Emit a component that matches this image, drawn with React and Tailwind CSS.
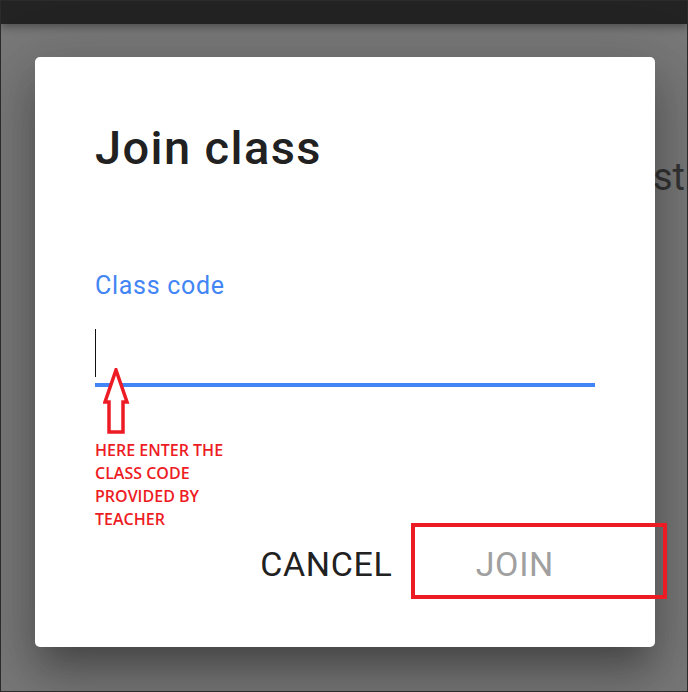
import React from "react";

const roboto = { fontFamily: "Roboto, 'Liberation Sans', sans-serif" };

const Arrow = () => (
  <svg width="28" height="68" viewBox="0 0 28 68" className="absolute left-[8px] top-[39px]">
    <polygon
      points="13,2 24,34 20,34 20,64 6,64 6,34 2,34"
      fill="white"
      stroke="#ed1c24"
      strokeWidth="3.5"
      strokeLinejoin="miter"
    />
  </svg>
);

const App = () => {
  return (
    <div
      className="relative w-[688px] h-[692px] overflow-hidden border border-[#2b2b2b] bg-[#787878]"
      style={roboto}
    >
      {/* page behind the scrim */}
      <div className="h-[23px] bg-[#232323] shadow-[0_3px_8px_rgba(0,0,0,0.35)]"></div>
      <span className="absolute left-[652px] top-[154px] text-[38px] leading-[44px] text-[#333333]">st</span>

      {/* dialog */}
      <div className="absolute left-[34px] top-[56px] w-[620px] h-[590px] flex flex-col rounded-[5px] bg-white pl-[60px] pt-[64px] shadow-[0_22px_30px_-12px_rgba(0,0,0,0.25),0_30px_50px_4px_rgba(0,0,0,0.16),0_12px_60px_12px_rgba(0,0,0,0.12)]">
        <h2 className="text-[47px] leading-[54px] font-medium tracking-[1.4px] text-[#212121]">Join class</h2>
        <div className="mt-[97px] text-[25px] leading-[28px] tracking-[0.7px] text-[#4285f4]">Class code</div>
        <div className="relative mt-[29px]">
          <div className="h-[48px] w-px bg-[#111]"></div>
          <div className="mt-[6px] h-[4px] w-[500px] bg-[#4285f4]"></div>
          <Arrow />
        </div>
        <div
          className="mt-[52px] flex flex-col text-[16px] leading-[23px] font-semibold text-[#ed1c24]"
          style={{ fontFamily: "'Open Sans', sans-serif" }}
        >
          <span>HERE ENTER THE</span>
          <span>CLASS CODE</span>
          <span>PROVIDED BY</span>
          <span>TEACHER</span>
        </div>
        <div className="mt-[13px] flex justify-end items-center gap-[83px] pr-[101px] text-[34px] leading-[40px]">
          <button className="text-[#212121] tracking-[0.02em]">CANCEL</button>
          <button className="text-[#a0a0a0] tracking-[0.02em]">JOIN</button>
        </div>
      </div>

      {/* annotation box */}
      <div className="absolute left-[410px] top-[522px] w-[256px] h-[76px] border-[4px] border-[#ed1c24]"></div>
    </div>
  );
};

export default App;
